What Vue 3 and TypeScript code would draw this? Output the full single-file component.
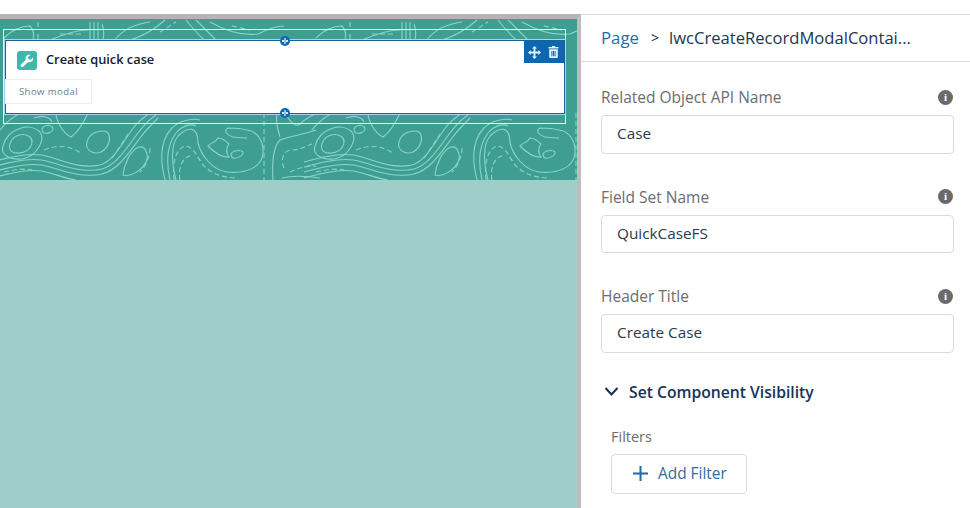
<script setup lang="ts">
interface Field { label: string; value: string }
const fields: Field[] = [
  { label: 'Related Object API Name', value: 'Case' },
  { label: 'Field Set Name', value: 'QuickCaseFS' },
  { label: 'Header Title', value: 'Create Case' },
]
const solid: string[] = [
  'M10 144C12 135 24 132 30 137C35 142 30 152 20 153C12 154 8 150 10 144Z',
  'M3 146C8 128 30 122 40 132C46 140 36 157 22 159C10 160 0 155 3 146Z',
  'M42 129C43 125 51 124 53 128C54 132 47 134 44 133C42 132 42 131 42 129Z',
  'M87 142C89 133 100 129 107 132C112 136 109 148 101 152C93 155 85 150 87 142Z',
  'M123 175C124 165 130 150 139 147C146 146 149 155 146 162C142 170 130 178 123 175Z',
  'M-8 162C18 155 34 152 50 157C66 162 82 169 100 165C114 161 122 143 134 127C140 119 146 116 150 113',
  'M-8 167C18 160 34 157 50 162C66 167 84 173 102 169C116 165 126 149 138 133C144 125 150 119 156 115',
  'M-8 172C18 165 34 162 50 167C66 172 84 178 102 174C118 170 128 154 140 138C146 130 152 124 158 118',
  'M-8 178C18 171 34 168 50 173C60 176 68 179 76 180',
  'M56 113C56 122 64 134 71 137C78 132 84 122 88 113',
  'M20 113C12 118 4 124 0 130M34 118C44 114 50 118 52 122',
  'M176 180C172 165 170 145 178 136C188 126 198 126 198 143C201 155 212 170 227 172C245 174 262 168 263 153C264 140 256 131 247 130C240 128 232 128 228 128C224 130 225 134 233 137C240 138 244 138 247 138',
  'M165 180C160 160 160 140 172 128C180 120 194 118 200 120',
  'M170 180C166 162 166 146 176 133C184 124 192 124 196 126',
  'M208 146C212 142 216 142 218 138C222 138 226 141 229 144C226 148 226 153 229 157C222 158 214 152 208 146Z',
  'M231 154C232 151 240 149 243 152C244 156 236 159 233 158C231 157 231 156 231 154Z',
  'M273 180C272 165 272 148 280 140C290 136 306 134 316 130',
  'M282 178C290 176 306 176 320 178',
  'M277 113C275 122 278 130 280 137M285 113C290 122 296 128 300 124C304 120 310 116 318 113',
  'M4 38C12 30 22 26 30 26C34 30 34 36 33 40M50 40C60 36 74 30 88 30',
  'M90 22V40M94 22V40M98 22V40M102 24C104 30 104 36 103 40',
  'M115 40C122 30 136 24 150 22M130 40C144 36 156 28 165 20',
  'M186 20C192 28 198 34 204 40M196 20C204 28 210 34 216 40',
  'M210 22C224 30 240 36 258 34C266 30 276 26 284 26',
]
const dashed: string[] = [
  'M44 150C58 144 72 146 82 154M4 172C14 170 24 168 32 170',
  'M150 148C150 156 146 166 140 172M112 158C118 150 124 140 128 134',
  'M174 180C172 162 176 150 184 146C194 146 196 156 204 166C210 172 220 178 238 178',
  'M180 180C178 168 182 158 190 156',
  'M264 113V180',
  'M284 168C280 158 284 150 292 150C300 150 306 146 312 144M290 172C298 168 306 166 316 166',
  'M38 22V30M38 34V40M160 32L176 22M60 34H84M232 26L250 30',
]
const copies: number[] = [0, 312]
</script>

<template>
  <div class="page">
    <main class="canvas">
      <section class="hero">
        <svg class="topo" viewBox="0 19 578 161" width="578" height="161" aria-hidden="true">
          <g v-for="x in copies" :key="x" :transform="`translate(${x} 0)`" fill="none" stroke="#8ad4c8">
            <path v-for="d in solid" :key="d" :d="d" stroke-width="1.1" />
            <path v-for="d in dashed" :key="d" :d="d" stroke-width="1.1" stroke-dasharray="5 3" />
          </g>
        </svg>
        <div class="frame">
          <article class="card">
            <span class="handle handle-top"><i></i></span>
            <div class="tools">
              <svg width="13" height="13" viewBox="0 0 13 13" fill="#e6f2fa" aria-hidden="true">
                <path d="M6.5 0 9 2.6H7.4V5.6H10.4V4L13 6.5 10.4 9V7.4H7.4V10.4H9L6.5 13 4 10.4H5.6V7.4H2.6V9L0 6.5 2.6 4V5.6H5.6V2.6H4Z" />
              </svg>
              <svg width="11" height="12" viewBox="0 0 11 12" fill="#e6f2fa" aria-hidden="true">
                <path d="M4 0H7V1H10.5V2.4H.5V1H4ZM1.2 3.2H9.8V11A1 1 0 0 1 8.8 12H2.2A1 1 0 0 1 1.2 11ZM3.4 5V10.2H4.4V5ZM5 5V10.2H6V5ZM6.6 5V10.2H7.6V5Z" />
              </svg>
            </div>
            <header class="card-head">
              <span class="card-icon">
                <svg width="14" height="14" viewBox="0 0 14 14" fill="#fff" aria-hidden="true">
                  <path d="M13 3.4 10.7 5.7 8.5 5.3 8.1 3.1 10.4.9C8.7.3 6.9.9 6.1 2.3 5.4 3.4 5.5 4.7 5.9 5.7L1 10.6C.4 11.2.4 12.1 1 12.7S2.6 13.3 3.2 12.7L8.1 7.9C9.3 8.4 10.7 8.3 11.8 7.4 13 6.4 13.5 4.8 13 3.4Z" />
                </svg>
              </span>
              <h2>Create quick case</h2>
            </header>
            <button class="modal-btn" type="button">Show modal</button>
            <span class="handle handle-bottom"><i></i></span>
          </article>
        </div>
      </section>
    </main>

    <aside class="panel">
      <nav class="crumbs">
        <a>Page</a>
        <span class="sep">&gt;</span>
        <span class="crumb-current">lwcCreateRecordModalContai...</span>
      </nav>
      <div class="form">
        <div v-for="f in fields" :key="f.label" class="field">
          <div class="field-label">
            <label>{{ f.label }}</label>
            <span class="info">i</span>
          </div>
          <div class="input">{{ f.value }}</div>
        </div>
        <div class="section-title">
          <svg width="15" height="9" viewBox="0 0 15 9" fill="none" stroke="#16325c" stroke-width="2" aria-hidden="true">
            <path d="M1.5 1 7.5 7.5 13.5 1" />
          </svg>
          <h3>Set Component Visibility</h3>
        </div>
        <div class="filters">
          <div class="filters-label">Filters</div>
          <button class="add-btn" type="button">
            <svg width="15" height="15" viewBox="0 0 15 15" stroke="#1b6aa5" stroke-width="2" aria-hidden="true">
              <path d="M7.5 0V15M0 7.5H15" />
            </svg>
            <span>Add Filter</span>
          </button>
        </div>
      </div>
    </aside>
  </div>
</template>

<style>
html, body { margin: 0; background: #fff; overflow: hidden; }
</style>

<style scoped>
.page {
  width: 970px;
  height: 508px;
  padding-top: 14px;
  box-sizing: border-box;
  display: grid;
  grid-template-columns: 581px 1fr;
  background: #fff;
  font-family: "Open Sans", sans-serif;
  overflow: hidden;
}
.canvas {
  background: #9fcdc9;
  border-top: 5px solid #b5b5b5;
  border-right: 4px solid #bdbdbd;
  min-height: 0;
}
.hero {
  position: relative;
  height: 161px;
  box-sizing: border-box;
  padding: 10px 11px 0 3px;
  background: #3f9e92;
}
.topo { position: absolute; left: 0; top: 0; }
.frame {
  position: relative;
  height: 95px;
  box-sizing: border-box;
  border: 1px solid #e6f5f2;
  padding: 10px 0 9px 1px;
}
.card {
  position: relative;
  height: 74px;
  box-sizing: border-box;
  background: #fff;
  border: 1px solid #17649c;
  outline: 1px solid #a9d6ee;
}
.handle {
  position: absolute;
  left: 274px;
  width: 10px;
  height: 10px;
  border-radius: 50%;
  background: #0f68b0;
  display: flex;
  align-items: center;
  justify-content: center;
}
.handle i { position: relative; display: block; width: 6px; height: 2px; background: #cfe6f7; }
.handle i::after {
  content: "";
  position: absolute;
  left: 2px;
  top: -2px;
  width: 2px;
  height: 6px;
  background: #8fc2e6;
}
.handle-top { top: -5px; }
.handle-bottom { bottom: -5px; }
.tools {
  position: absolute;
  top: 0;
  right: 0;
  width: 40px;
  height: 22px;
  background: #0c66b0;
  display: flex;
  align-items: center;
  justify-content: center;
  gap: 7px;
  padding-right: 1px;
  box-sizing: border-box;
}
.card-head {
  display: flex;
  align-items: center;
  gap: 9px;
  padding: 9px 0 0 11px;
}
.card-icon {
  width: 20px;
  height: 19px;
  border-radius: 3px;
  background: #3fb8ab;
  display: flex;
  align-items: center;
  justify-content: center;
}
.card-head h2 {
  margin: 0;
  padding-bottom: 3px;
  font-size: 12.8px;
  font-weight: 600;
  color: #16202b;
}
.modal-btn {
  display: block;
  margin-top: 8px;
  margin-left: -1px;
  width: 87px;
  height: 25px;
  background: #fff;
  border: 1px solid #eceeef;
  padding: 0;
  font: 400 9.6px "Open Sans", sans-serif;
  letter-spacing: .4px;
  color: #6d7f86;
}
.panel {
  display: flex;
  flex-direction: column;
  color: #16325c;
}
.crumbs {
  height: 48px;
  box-sizing: border-box;
  border-top: 1px solid #dcdcdc;
  border-bottom: 1px solid #dcdcdc;
  display: flex;
  align-items: center;
  padding: 0 0 2px 20px;
  font-size: 16.8px;
}
.crumbs a { color: #1d6ea6; }
.sep { margin: 0 10px 0 12px; font-size: 14px; color: #1c2b3a; }
.crumb-current { color: #20364f; font-size: 16.6px; }
.form { padding: 25px 16px 0 20px; }
.field { margin-bottom: 33px; }
.field-label {
  display: flex;
  justify-content: space-between;
  align-items: center;
  height: 20px;
  margin-bottom: 8px;
  padding-right: 1px;
}
.field-label label { font-size: 15.5px; color: #6b6d70; }
.info {
  width: 15px;
  height: 15px;
  border-radius: 50%;
  background: #6a6a6a;
  color: #fff;
  font: 700 11px/15px "Liberation Serif", serif;
  text-align: center;
}
.input {
  height: 38.5px;
  box-sizing: border-box;
  border: 1px solid #dddbda;
  border-radius: 4px;
  padding: 0 15px 2px;
  display: flex;
  align-items: center;
  font-size: 15.3px;
  color: #2a3b4d;
}
.section-title {
  display: flex;
  align-items: center;
  gap: 10px;
  margin-top: -4px;
  padding-left: 3px;
  height: 20px;
}
.section-title h3 {
  margin: 0;
  font-size: 15.7px;
  font-weight: 600;
  color: #16325c;
}
.filters { padding: 25px 0 0 10px; }
.filters-label { font-size: 14.5px; color: #6b6d70; line-height: 20px; margin-bottom: 7px; }
.add-btn {
  width: 136px;
  height: 40px;
  box-sizing: border-box;
  border: 1px solid #dddbda;
  border-radius: 4px;
  background: #fff;
  display: flex;
  align-items: center;
  gap: 10px;
  padding: 0 0 0 21px;
  font: 400 15.4px "Open Sans", sans-serif;
  color: #2e6da4;
}
</style>
